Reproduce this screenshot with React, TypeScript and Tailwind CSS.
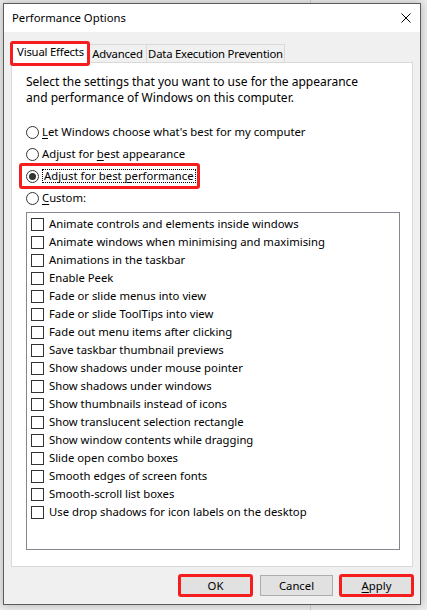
import React from 'react';

const effects = [
  'Animate controls and elements inside windows',
  'Animate windows when minimising and maximising',
  'Animations in the taskbar',
  'Enable Peek',
  'Fade or slide menus into view',
  'Fade or slide ToolTips into view',
  'Fade out menu items after clicking',
  'Save taskbar thumbnail previews',
  'Show shadows under mouse pointer',
  'Show shadows under windows',
  'Show thumbnails instead of icons',
  'Show translucent selection rectangle',
  'Show window contents while dragging',
  'Slide open combo boxes',
  'Smooth edges of screen fonts',
  'Smooth-scroll list boxes',
  'Use drop shadows for icon labels on the desktop',
];

const Key = ({ children }: { children: React.ReactNode }) => (
  <span className="underline underline-offset-[2px] decoration-1">{children}</span>
);

const Radio = ({ checked }: { checked?: boolean }) => (
  <span className="w-[13px] h-[13px] rounded-full border border-[#333333] bg-white flex items-center justify-center shrink-0">
    {checked && <span className="w-[7px] h-[7px] rounded-full bg-[#333333]" />}
  </span>
);

const RadioRow = ({ children, checked, marked }: { children: React.ReactNode; checked?: boolean; marked?: boolean }) => (
  <div className="h-[22px] flex items-center">
    <div className="relative inline-flex items-center gap-[3px]">
      <Radio checked={checked} />
      {children}
      {marked && (
        <span className="absolute -left-[7px] -top-[6px] -bottom-[6px] -right-[4px] border-[3px] border-[#f51d1d] rounded-[3px] pointer-events-none" />
      )}
    </div>
  </div>
);

export default function App() {
  return (
    <div className="relative w-[427px] h-[610px] bg-[#ebebeb] pt-[3px] pl-[3px] overflow-hidden font-['Noto_Sans','Liberation_Sans',sans-serif] text-[11.3px] leading-[16px] text-black">
      <div className="absolute left-[310px] top-0 bottom-0 w-px bg-[#cfcfcf]" />
      <div className="relative w-[418px] h-[602px] border border-[#5c5c5c] bg-[#f0f0f0] flex flex-col shadow-[0_0_8px_rgba(0,0,0,0.25)]">
        {/* title bar */}
        <div className="h-[28px] bg-white flex items-center justify-between pl-[8px] pr-[9px]">
          <span>Performance Options</span>
          <svg width="10" height="10" viewBox="0 0 10 10" className="block">
            <path d="M0.5 0.5L9.5 9.5M9.5 0.5L0.5 9.5" stroke="#000" strokeWidth="1" />
          </svg>
        </div>

        <div className="flex-1 flex flex-col px-[7px] pt-[10px]">
          {/* tabs */}
          <div className="flex items-end h-[20px] pl-[1px] whitespace-nowrap tracking-[-0.2px]">
            <div className="relative z-10 w-[77px] h-[21px] -mb-px bg-white border border-b-0 border-[#d9d9d9] flex items-center justify-center pb-[2px]">
              Visual Effects
              <span className="absolute -left-[3px] -top-[2px] -right-[2px] -bottom-[3px] border-[3px] border-[#f51d1d] rounded-[3px] pointer-events-none" />
            </div>
            <div className="w-[58px] h-[18px] bg-[#f0f0f0] border border-b-0 border-l-0 border-[#d9d9d9] flex items-center justify-center">
              Advanced
            </div>
            <div className="w-[138px] h-[18px] bg-[#f0f0f0] border border-b-0 border-l-0 border-[#d9d9d9] flex items-center justify-center">
              Data Execution Prevention
            </div>
          </div>

          {/* panel */}
          <div className="h-[505px] bg-white border border-[#d9d9d9] pl-[14px] pt-[11px]">
            <p className="w-[345px] text-[12px]">
              Select the settings that you want to use for the appearance and performance of Windows on this computer.
            </p>

            <div className="mt-[15px]">
              <RadioRow>
                <span><Key>L</Key>et Windows choose what's best for my computer</span>
              </RadioRow>
              <RadioRow>
                <span>Adjust for <Key>b</Key>est appearance</span>
              </RadioRow>
              <RadioRow checked marked>
                <span className="border border-dotted border-black leading-[12px] px-px">
                  Adjust for best <Key>p</Key>erformance
                </span>
              </RadioRow>
              <RadioRow>
                <span><Key>C</Key>ustom:</span>
              </RadioRow>
            </div>

            <div className="mt-[3px] w-[374px] h-[338px] border border-[#828790] bg-white pt-[2px] pl-[4px]">
              {effects.map((label) => (
                <div key={label} className="h-[18px] flex items-center gap-[5px]">
                  <span className="w-[13px] h-[13px] border border-[#333333] bg-white shrink-0" />
                  <span>{label}</span>
                </div>
              ))}
            </div>
          </div>

          {/* buttons */}
          <div className="mt-[8px] flex justify-end gap-[8px]">
            <button className="w-[73px] h-[21px] bg-[#e1e1e1] border border-[#adadad] outline-[3px] outline-solid outline-[#f51d1d] outline-offset-[-2px] rounded-[2px]">
              OK
            </button>
            <button className="w-[73px] h-[21px] bg-[#e1e1e1] border border-[#adadad] -mr-px">
              Cancel
            </button>
            <button className="w-[73px] h-[21px] bg-[#e1e1e1] border border-[#adadad] outline-[3px] outline-solid outline-[#f51d1d] outline-offset-[-2px] rounded-[2px]">
              <Key>A</Key>pply
            </button>
          </div>
        </div>
      </div>
    </div>
  );
}
